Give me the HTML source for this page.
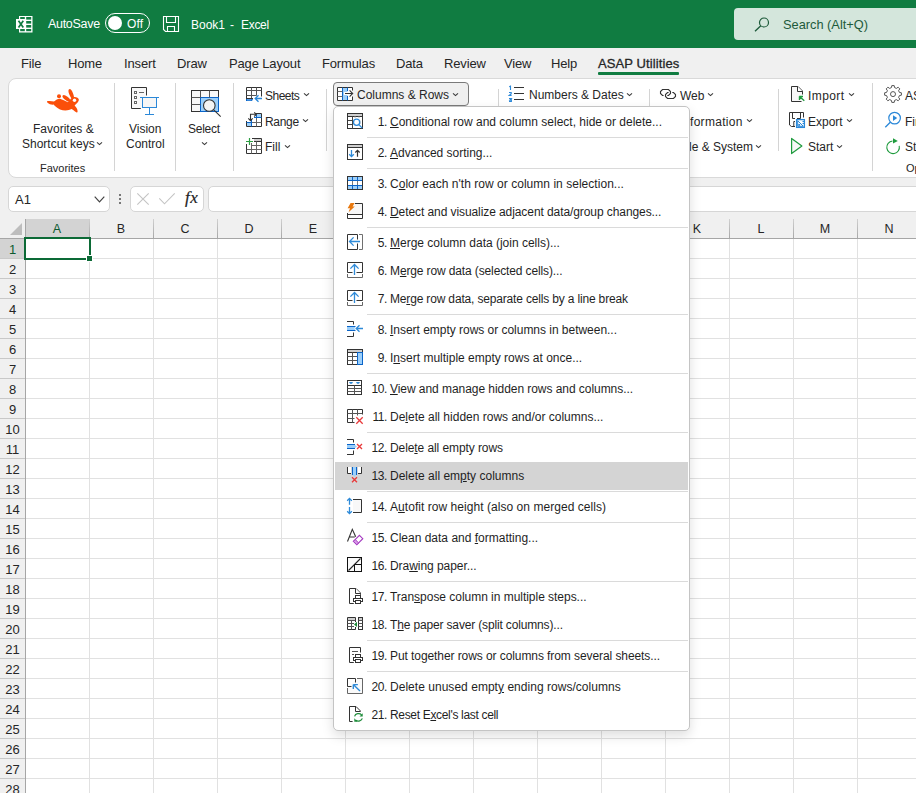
<!DOCTYPE html>
<html><head><meta charset="utf-8"><style>
*{margin:0;padding:0;box-sizing:border-box}
html,body{width:916px;height:793px;overflow:hidden;background:#f0f0f0;font-family:"Liberation Sans",sans-serif;color:#262626;position:relative}
.a{position:absolute}
.t{position:absolute;white-space:nowrap;line-height:16px}
svg{position:absolute;overflow:visible}
.w{color:#fff}
.tab{font-size:13px;color:#262626}
.rb{font-size:12px;color:#262626}
.sep{position:absolute;width:1px;background:#d4d4d4}
.mi{font-size:12px;color:#1f1f1f}
.ul{text-decoration:underline;text-underline-offset:2px;text-decoration-thickness:1px}
</style></head><body>
<div class="a" style="left:0;top:0;width:916px;height:48px;background:#107c41"></div>
<svg style="left:12px;top:12px" width="24" height="24" viewBox="0 0 24 24">
<rect x="7" y="4" width="13.5" height="16.5" fill="#fff"/>
<rect x="8.2" y="5" width="4.6" height="2" fill="#107c41"/>
<rect x="14.2" y="5" width="5" height="2.6" fill="#107c41"/>
<rect x="14.2" y="9" width="5" height="2.6" fill="#107c41"/>
<rect x="14.2" y="13" width="5" height="2.6" fill="#107c41"/>
<rect x="14.2" y="17" width="5" height="2.2" fill="#107c41"/>
<rect x="8.2" y="17" width="4.6" height="2.2" fill="#107c41"/>
<rect x="4" y="7" width="9.4" height="10" fill="#fff"/>
<path d="M6.5 8.8 L11.3 15.4 M11.3 8.8 L6.5 15.4" stroke="#107c41" stroke-width="1.7"/>
</svg>
<div class="t w" style="left:48px;top:16px;font-size:12.5px;letter-spacing:-0.3px">AutoSave</div>
<div class="a" style="left:105px;top:13px;width:45px;height:20px;border:1px solid #fff;border-radius:10px"></div>
<div class="a" style="left:108px;top:16px;width:14px;height:14px;background:#fff;border-radius:50%"></div>
<div class="t w" style="left:127px;top:16px;font-size:12px;letter-spacing:0.2px">Off</div>
<svg style="left:162px;top:15px" width="18" height="18" viewBox="0 0 18 18">
<path d="M1.5 1.5 H16.5 V16.5 H3.5 L1.5 14.5 Z" fill="none" stroke="#fff" stroke-width="1.1"/>
<path d="M4.5 1.5 V7.5 H13.5 V1.5" fill="none" stroke="#fff" stroke-width="1.1"/>
<path d="M5.5 16.5 V11.5 H12.5 V16.5" fill="none" stroke="#fff" stroke-width="1.1"/>
</svg>
<div class="t w" style="left:191px;top:17px;font-size:12px;">Book1</div>
<div class="t w" style="left:230px;top:17px;font-size:12px;">-</div>
<div class="t w" style="left:241px;top:17px;font-size:12px;letter-spacing:-0.3px">Excel</div>
<div class="a" style="left:734px;top:8px;width:200px;height:32px;background:#d4e6dc;border-radius:4px"></div>
<svg style="left:754px;top:17px" width="16" height="15" viewBox="0 0 16 15">
<circle cx="10" cy="5.5" r="4.5" fill="none" stroke="#1d5a3a" stroke-width="1.2"/>
<line x1="6.8" y1="8.7" x2="1" y2="14.3" stroke="#1d5a3a" stroke-width="1.3"/>
</svg>
<div class="t " style="left:783px;top:17px;font-size:12.8px;color:#1e5a3b">Search (Alt+Q)</div>
<div class="t tab" style="left:21px;top:56px;font-size:13px;letter-spacing:-0.15px">File</div>
<div class="t tab" style="left:68px;top:56px;font-size:13px;letter-spacing:-0.15px">Home</div>
<div class="t tab" style="left:124px;top:56px;font-size:13px;letter-spacing:-0.15px">Insert</div>
<div class="t tab" style="left:177px;top:56px;font-size:13px;letter-spacing:-0.15px">Draw</div>
<div class="t tab" style="left:229px;top:56px;font-size:13px;letter-spacing:-0.15px">Page Layout</div>
<div class="t tab" style="left:322px;top:56px;font-size:13px;letter-spacing:-0.15px">Formulas</div>
<div class="t tab" style="left:396px;top:56px;font-size:13px;letter-spacing:-0.15px">Data</div>
<div class="t tab" style="left:444px;top:56px;font-size:13px;letter-spacing:-0.15px">Review</div>
<div class="t tab" style="left:504px;top:56px;font-size:13px;letter-spacing:-0.15px">View</div>
<div class="t tab" style="left:551px;top:56px;font-size:13px;letter-spacing:-0.15px">Help</div>
<div class="t tab" style="left:598px;top:56px;font-size:13px;-webkit-text-stroke:0.3px #262626;letter-spacing:0.1px">ASAP Utilities</div>
<div class="a" style="left:598px;top:72px;width:81px;height:3px;background:#107c41;border-radius:1px"></div>
<div class="a" style="left:8px;top:78px;width:940px;height:100px;background:#fff;border:1px solid #d9d9d9;border-radius:8px"></div>
<div class="sep" style="left:114px;top:83px;height:88px"></div>
<div class="sep" style="left:175px;top:83px;height:88px"></div>
<div class="sep" style="left:233px;top:83px;height:88px"></div>
<div class="sep" style="left:326px;top:89px;height:62px"></div>
<div class="sep" style="left:498px;top:89px;height:62px"></div>
<div class="sep" style="left:649px;top:89px;height:62px"></div>
<div class="sep" style="left:778px;top:89px;height:62px"></div>
<div class="sep" style="left:872px;top:83px;height:88px"></div>
<svg style="left:42px;top:86px" width="40" height="30" viewBox="0 0 40 30">
<path d="M5 15.2 C7.5 14.8 10 15 12 15.6 C14 13.8 16 12.6 18 12.8 C20.5 13.5 23 15 26 16.3 L29 12.6 C31 10.6 33.5 10.4 35.5 11.8 C37.3 13 37.3 14.6 35.6 16.5 C34.6 17.6 33.6 18.6 32.6 19.6 C34 21 35.6 23 35.6 25.2 C35.6 27 34 26.6 33 25.6 C31.8 24.4 30.6 23.4 29.6 23 C27 24.6 22 25 18 23.5 C15 22.3 13 20.2 11.5 18.6 C9.5 18.8 7 18.2 5.6 16.8 C5 16.2 4.8 15.6 5 15.2 Z" fill="#fa4f0a"/>
<ellipse cx="24.3" cy="12.3" rx="4.6" ry="1.9" transform="rotate(38 24.3 12.3)" fill="#fa4f0a"/>
<ellipse cx="29.2" cy="8" rx="5.2" ry="1.9" transform="rotate(68 29.2 8)" fill="#fa4f0a"/>
<circle cx="17" cy="10.3" r="2" fill="#fa4f0a"/>
<circle cx="32.5" cy="14.2" r="1.7" fill="#fff"/>
</svg>
<div class="t rb" style="left:33px;top:121px;font-size:12px;">Favorites &amp;</div>
<div class="t rb" style="left:22px;top:136px;font-size:12px;">Shortcut keys</div>
<svg style="left:97px;top:142px" width="5" height="3" viewBox="0 0 5 3"><polyline points="0,0.3 2.5,2.6 5,0.3" fill="none" stroke="#3a3a3a" stroke-width="1.1"/></svg>
<div class="t rb" style="left:40px;top:160px;font-size:11px;">Favorites</div>
<svg style="left:131px;top:87px" width="29" height="28" viewBox="0 0 29 28">
<path d="M15.5 8.5 V0.5 H0.5 V21.5 H9.8" fill="#f8f8f8" stroke="#333"/>
<rect x="3.5" y="4.5" width="2" height="2" fill="#fff" stroke="#666"/>
<rect x="3.5" y="9.5" width="2" height="2" fill="#fff" stroke="#666"/>
<rect x="3.5" y="14.5" width="2" height="2" fill="#fff" stroke="#666"/>
<line x1="8" y1="5.5" x2="13" y2="5.5" stroke="#666"/>
<rect x="11.5" y="10.5" width="14" height="10" fill="#f6f6f6" stroke="#2b88d8"/>
<line x1="9" y1="10.5" x2="28" y2="10.5" stroke="#2b88d8"/>
<line x1="18.5" y1="21" x2="18.5" y2="27" stroke="#2b88d8"/>
<line x1="14" y1="27.5" x2="23" y2="27.5" stroke="#2b88d8"/>
</svg>
<div class="t rb" style="left:129px;top:121px;font-size:12px;">Vision</div>
<div class="t rb" style="left:126px;top:136px;font-size:12px;">Control</div>
<svg style="left:191px;top:90px" width="31" height="28" viewBox="0 0 31 28">
<rect x="0.5" y="0.5" width="27" height="21" fill="#f8f8f8" stroke="#333"/>
<rect x="9.5" y="7.5" width="18" height="14" fill="#9ccffa" stroke="#0a64c8"/>
<line x1="0.5" y1="7.5" x2="9.5" y2="7.5" stroke="#555"/>
<line x1="0.5" y1="14.5" x2="9.5" y2="14.5" stroke="#555"/>
<line x1="9.5" y1="0.5" x2="9.5" y2="7.5" stroke="#555"/>
<line x1="18.5" y1="0.5" x2="18.5" y2="7.5" stroke="#555"/>
<circle cx="18.3" cy="15.5" r="5.8" fill="#f4f4f4" stroke="#333" stroke-width="1.1"/>
<line x1="22.5" y1="19.7" x2="29.7" y2="26.6" stroke="#333" stroke-width="1.1"/>
</svg>
<div class="t rb" style="left:188px;top:121px;font-size:12px;letter-spacing:-0.25px">Select</div>
<svg style="left:202px;top:142px" width="5" height="3" viewBox="0 0 5 3"><polyline points="0,0.3 2.5,2.6 5,0.3" fill="none" stroke="#3a3a3a" stroke-width="1.1"/></svg>
<svg style="left:246px;top:87px" width="17" height="16" viewBox="0 0 17 16">
<path d="M0.5 11.5 V0.5 H15.5 V9.5" fill="none" stroke="#333"/>
<path d="M0.5 3.5 H15.5 M0.5 8.5 H10.5 M5.5 0.5 V11.5 M10.5 0.5 V8.5" stroke="#555"/>
<path d="M0 11.5 H7" stroke="#333"/>
<path d="M0 12 H7 L6 14 H0 Z" fill="#0a64c8"/><rect x="1" y="12.5" width="4.5" height="0.8" fill="#9ccffa"/>
<path d="M16 11.5 H9.3 M12.5 8.2 L9.2 11.5 L12.5 14.8" fill="none" stroke="#2b88d8" stroke-width="1.3"/>
</svg>
<div class="t rb" style="left:265px;top:88px;font-size:12px;letter-spacing:-0.5px">Sheets</div>
<svg style="left:304px;top:93px" width="5" height="3" viewBox="0 0 5 3"><polyline points="0,0.3 2.5,2.6 5,0.3" fill="none" stroke="#3a3a3a" stroke-width="1.1"/></svg>
<svg style="left:246px;top:110px" width="17" height="17" viewBox="0 0 17 17">
<path d="M10 3.5 H15.5 V16.5 H0.5 V11" fill="#fff" stroke="#333"/>
<rect x="10" y="4" width="5" height="3" fill="#9ccffa"/><rect x="1" y="12" width="4.5" height="4" fill="#9ccffa"/>
<path d="M8 7.5 H15.5 M10.5 5 V7.5 M0.5 12.5 H5.5 M5.5 10 V16.5" stroke="#0a64c8"/>
<path d="M10.5 8 V16.5 M6 12.5 H15.5" stroke="#666"/>
<path d="M4.5 10.6 V4.3 H10.2 M8.2 2.3 L10.4 4.3 L8.2 6.5 M2.3 8.4 L4.5 10.6 L6.7 8.4" fill="none" stroke="#333" stroke-width="1.1"/>
</svg>
<div class="t rb" style="left:265px;top:114px;font-size:12px;letter-spacing:-0.3px">Range</div>
<svg style="left:303px;top:119px" width="5" height="3" viewBox="0 0 5 3"><polyline points="0,0.3 2.5,2.6 5,0.3" fill="none" stroke="#3a3a3a" stroke-width="1.1"/></svg>
<svg style="left:246px;top:136px" width="17" height="18" viewBox="0 0 17 18">
<path d="M0.5 8 V17.5 H15.5 V2.5 H6" fill="#fff" stroke="#333"/>
<rect x="8" y="3" width="7" height="2" fill="#d0d0d0"/>
<path d="M8 5.5 H15.5" stroke="#333"/>
<path d="M5.5 7 V17.5 M10.5 5.5 V17.5 M5 9.5 H15.5 M0.5 13.5 H15.5" stroke="#666"/>
<path d="M0 5.5 H7 M3.5 2 V9" stroke="#2ea043" stroke-width="1.2"/>
</svg>
<div class="t rb" style="left:265px;top:139px;font-size:12px;">Fill</div>
<svg style="left:285px;top:145px" width="5" height="3" viewBox="0 0 5 3"><polyline points="0,0.3 2.5,2.6 5,0.3" fill="none" stroke="#3a3a3a" stroke-width="1.1"/></svg>
<svg style="left:506px;top:84px" width="20" height="20" viewBox="0 0 20 20">
<path d="M8 3.5 H18 M8 9.5 H18 M8 15.5 H18" stroke="#333"/>
<path d="M3.2 2.8 L4.5 2.2 V6" fill="none" stroke="#2b88d8" stroke-width="1.1"/>
<path d="M3 8.5 H5.2 V9.7 L3.2 11.4 H5.6" fill="none" stroke="#2b88d8" stroke-width="1.1"/>
<path d="M3 14.5 H5.4 L4 15.9 H5.4 V17.4 H3" fill="none" stroke="#2b88d8" stroke-width="1.1"/>
</svg>
<div class="t rb" style="left:529px;top:87px;font-size:12px;">Numbers &amp; Dates</div>
<svg style="left:627px;top:93px" width="5" height="3" viewBox="0 0 5 3"><polyline points="0,0.3 2.5,2.6 5,0.3" fill="none" stroke="#3a3a3a" stroke-width="1.1"/></svg>
<svg style="left:658px;top:84px" width="20" height="20" viewBox="0 0 20 20">
<path d="M5.6 11.5 H4.5 L2.5 9.5 V7.5 L4.5 5.5 H10.5 L12.5 7.5 V9.5 L10.5 11.5 H9.3" fill="none" stroke="#333" stroke-width="1.1"/>
<path d="M10.6 8.5 H9.5 L7.5 10.5 V12.5 L9.5 14.5 H15.5 L17.5 12.5 V10.5 L15.5 8.5 H14.3" fill="none" stroke="#333" stroke-width="1.1"/>
</svg>
<div class="t rb" style="left:680px;top:88px;font-size:12px;">Web</div>
<svg style="left:708px;top:93px" width="5" height="3" viewBox="0 0 5 3"><polyline points="0,0.3 2.5,2.6 5,0.3" fill="none" stroke="#3a3a3a" stroke-width="1.1"/></svg>
<div class="t rb" style="left:690px;top:114px;font-size:12px;letter-spacing:0.3px">formation</div>
<svg style="left:747px;top:119px" width="5" height="3" viewBox="0 0 5 3"><polyline points="0,0.3 2.5,2.6 5,0.3" fill="none" stroke="#3a3a3a" stroke-width="1.1"/></svg>
<div class="t rb" style="left:689px;top:139px;font-size:12px;">le &amp; System</div>
<svg style="left:756px;top:145px" width="5" height="3" viewBox="0 0 5 3"><polyline points="0,0.3 2.5,2.6 5,0.3" fill="none" stroke="#3a3a3a" stroke-width="1.1"/></svg>
<svg style="left:787px;top:84px" width="20" height="20" viewBox="0 0 20 20">
<path d="M14.5 17.5 H4.5 V2.5 H11 L15.5 7 V10.5" fill="#f8f8f8" stroke="#333"/>
<path d="M10.5 2.5 V7.5 H15.5" fill="#fff" stroke="#333"/>
<path d="M12.3 12.5 H16 M12.5 12.3 V16 M12.8 12.8 L17.3 16.8" fill="none" stroke="#1f9b3e" stroke-width="1.4"/>
</svg>
<div class="t rb" style="left:808px;top:88px;font-size:12px;letter-spacing:0.4px">Import</div>
<svg style="left:849px;top:93px" width="5" height="3" viewBox="0 0 5 3"><polyline points="0,0.3 2.5,2.6 5,0.3" fill="none" stroke="#3a3a3a" stroke-width="1.1"/></svg>
<svg style="left:787px;top:110px" width="20" height="20" viewBox="0 0 20 20">
<path d="M2.5 15 V2.5 H16.5 V7.5" fill="#fff" stroke="#333"/>
<path d="M5.5 2.5 V8.5 H8 M10 8.5 H13.5 V2.5" fill="none" stroke="#333"/>
<path d="M2.5 15 L4.5 16.5 H8 M6.8 16.5 V11.5 H8" fill="none" stroke="#333"/>
<rect x="9.6" y="9.6" width="7.8" height="7.8" fill="#fff" stroke="#2b88d8" stroke-width="1.3"/>
<path d="M10.7 10.7 L16.3 16.3 H10.7 Z" fill="none" stroke="#2b88d8" stroke-width="1"/>
<path d="M15.5 11.5 H17 M15.5 13.5 H17" stroke="#2b88d8"/>
<rect x="11.3" y="14" width="1.8" height="1.8" fill="#2b88d8"/>
</svg>
<div class="t rb" style="left:808px;top:114px;font-size:12px;">Export</div>
<svg style="left:847px;top:119px" width="5" height="3" viewBox="0 0 5 3"><polyline points="0,0.3 2.5,2.6 5,0.3" fill="none" stroke="#3a3a3a" stroke-width="1.1"/></svg>
<svg style="left:787px;top:136px" width="20" height="20" viewBox="0 0 20 20">
<path d="M4.6 2.4 L14.9 10 L4.6 17.6 Z" fill="#f8f8f8" stroke="#1f9b3e" stroke-width="1.2" stroke-linejoin="round"/>
</svg>
<div class="t rb" style="left:808px;top:139px;font-size:12px;">Start</div>
<svg style="left:837px;top:145px" width="5" height="3" viewBox="0 0 5 3"><polyline points="0,0.3 2.5,2.6 5,0.3" fill="none" stroke="#3a3a3a" stroke-width="1.1"/></svg>
<svg style="left:882px;top:84px" width="20" height="20" viewBox="0 0 20 20">
<circle cx="11" cy="10.1" r="2.5" fill="none" stroke="#444" stroke-width="0.9"/>
<path d="M9.8 2.6 H12.2 L12.6 4.6 L14.4 5.4 L16.1 4.2 L17.8 5.9 L16.6 7.6 L17.4 9.4 L19.4 9.8 V12.2 L17.4 12.6 L16.6 14.4 L17.8 16.1 L16.1 17.8 L14.4 16.6 L12.6 17.4 L12.2 19.4 H9.8 L9.4 17.4 L7.6 16.6 L5.9 17.8 L4.2 16.1 L5.4 14.4 L4.6 12.6 L2.6 12.2 V9.8 L4.6 9.4 L5.4 7.6 L4.2 5.9 L5.9 4.2 L7.6 5.4 L9.4 4.6 Z" transform="translate(0,-1) scale(1)" fill="none" stroke="#444" stroke-width="0.9"/>
</svg>
<div class="t rb" style="left:905px;top:88px;font-size:12px;">ASAP</div>
<svg style="left:882px;top:110px" width="20" height="20" viewBox="0 0 20 20">
<circle cx="12.6" cy="8.1" r="5.8" fill="#fff" stroke="#2b88d8" stroke-width="1.2"/>
<path d="M11 5.3 L15.2 8.1 L11 10.9 Z" fill="#2b88d8"/>
<line x1="8.3" y1="12.3" x2="3.3" y2="17.3" stroke="#2b88d8" stroke-width="1.3"/>
</svg>
<div class="t rb" style="left:905px;top:114px;font-size:12px;">Find</div>
<svg style="left:882px;top:136px" width="20" height="20" viewBox="0 0 20 20">
<path d="M10.5 5 A6.3 6.3 0 1 0 17.2 9.8" fill="none" stroke="#1f9b3e" stroke-width="1.1"/>
<path d="M11 2.3 L15.8 5 L11 7.6 Z" fill="#1f9b3e"/>
</svg>
<div class="t rb" style="left:905px;top:139px;font-size:12px;">Start</div>
<div class="t rb" style="left:906px;top:160px;font-size:11px;">Options</div>
<div class="a" style="left:8px;top:186px;width:102px;height:26px;background:#fff;border:1px solid #d6d6d6;border-radius:5px"></div>
<div class="t rb" style="left:15px;top:192px;font-size:13px;">A1</div>
<svg style="left:94px;top:196px" width="11" height="7" viewBox="0 0 11 7"><polyline points="0.7,0.7 5.5,5.8 10.3,0.7" fill="none" stroke="#444" stroke-width="1.2"/></svg>
<div class="a" style="left:119px;top:194px;width:2px;height:2px;background:#777"></div>
<div class="a" style="left:119px;top:198px;width:2px;height:2px;background:#777"></div>
<div class="a" style="left:119px;top:202px;width:2px;height:2px;background:#777"></div>
<div class="a" style="left:130px;top:186px;width:74px;height:26px;background:#fff;border:1px solid #d6d6d6;border-radius:5px"></div>
<svg style="left:137px;top:193px" width="12" height="12" viewBox="0 0 12 12"><path d="M0.3 0.3 L11.7 11.7 M11.7 0.3 L0.3 11.7" stroke="#c4c4c4" stroke-width="1.1"/></svg>
<svg style="left:159px;top:193px" width="16" height="12" viewBox="0 0 16 12"><path d="M0.3 5.3 L5.5 10.8 L15.7 0.3" fill="none" stroke="#c4c4c4" stroke-width="1.1"/></svg>
<div class="t" style="left:185px;top:190px;font-family:'Liberation Serif',serif;font-style:italic;font-size:17px;color:#222;-webkit-text-stroke:0.2px #222;letter-spacing:0.5px">fx</div>
<div class="a" style="left:208px;top:186px;width:740px;height:26px;background:#fff;border:1px solid #d6d6d6;border-radius:5px"></div>
<div class="a" style="left:26px;top:239px;width:890px;height:554px;background:#fff"></div>
<svg style="left:10px;top:223px" width="12" height="12" viewBox="0 0 12 12"><path d="M12 0 V12 H0 Z" fill="#bdbdbd"/></svg>
<div class="a" style="left:26px;top:219px;width:63px;height:18px;background:#d3d3d3"></div>
<div class="a" style="left:89px;top:219px;width:1px;height:19px;background:linear-gradient(#d0d0d0,#a8a8a8)"></div>
<div class="a" style="left:153px;top:219px;width:1px;height:19px;background:linear-gradient(#d0d0d0,#a8a8a8)"></div>
<div class="a" style="left:217px;top:219px;width:1px;height:19px;background:linear-gradient(#d0d0d0,#a8a8a8)"></div>
<div class="a" style="left:281px;top:219px;width:1px;height:19px;background:linear-gradient(#d0d0d0,#a8a8a8)"></div>
<div class="a" style="left:345px;top:219px;width:1px;height:19px;background:linear-gradient(#d0d0d0,#a8a8a8)"></div>
<div class="a" style="left:409px;top:219px;width:1px;height:19px;background:linear-gradient(#d0d0d0,#a8a8a8)"></div>
<div class="a" style="left:473px;top:219px;width:1px;height:19px;background:linear-gradient(#d0d0d0,#a8a8a8)"></div>
<div class="a" style="left:537px;top:219px;width:1px;height:19px;background:linear-gradient(#d0d0d0,#a8a8a8)"></div>
<div class="a" style="left:601px;top:219px;width:1px;height:19px;background:linear-gradient(#d0d0d0,#a8a8a8)"></div>
<div class="a" style="left:665px;top:219px;width:1px;height:19px;background:linear-gradient(#d0d0d0,#a8a8a8)"></div>
<div class="a" style="left:729px;top:219px;width:1px;height:19px;background:linear-gradient(#d0d0d0,#a8a8a8)"></div>
<div class="a" style="left:793px;top:219px;width:1px;height:19px;background:linear-gradient(#d0d0d0,#a8a8a8)"></div>
<div class="a" style="left:857px;top:219px;width:1px;height:19px;background:linear-gradient(#d0d0d0,#a8a8a8)"></div>
<div class="a" style="left:921px;top:219px;width:1px;height:19px;background:linear-gradient(#d0d0d0,#a8a8a8)"></div>
<div class="a" style="left:0;top:238px;width:916px;height:1px;background:#a6a6a6"></div>
<div class="a" style="left:25px;top:219px;width:1px;height:574px;background:#a6a6a6"></div>
<div class="t" style="left:37px;top:221px;width:40px;text-align:center;font-size:12.5px;color:#0c5a2f">A</div>
<div class="t" style="left:101px;top:221px;width:40px;text-align:center;font-size:12.5px;color:#262626">B</div>
<div class="t" style="left:165px;top:221px;width:40px;text-align:center;font-size:12.5px;color:#262626">C</div>
<div class="t" style="left:229px;top:221px;width:40px;text-align:center;font-size:12.5px;color:#262626">D</div>
<div class="t" style="left:293px;top:221px;width:40px;text-align:center;font-size:12.5px;color:#262626">E</div>
<div class="t" style="left:357px;top:221px;width:40px;text-align:center;font-size:12.5px;color:#262626">F</div>
<div class="t" style="left:421px;top:221px;width:40px;text-align:center;font-size:12.5px;color:#262626">G</div>
<div class="t" style="left:485px;top:221px;width:40px;text-align:center;font-size:12.5px;color:#262626">H</div>
<div class="t" style="left:549px;top:221px;width:40px;text-align:center;font-size:12.5px;color:#262626">I</div>
<div class="t" style="left:613px;top:221px;width:40px;text-align:center;font-size:12.5px;color:#262626">J</div>
<div class="t" style="left:677px;top:221px;width:40px;text-align:center;font-size:12.5px;color:#262626">K</div>
<div class="t" style="left:741px;top:221px;width:40px;text-align:center;font-size:12.5px;color:#262626">L</div>
<div class="t" style="left:805px;top:221px;width:40px;text-align:center;font-size:12.5px;color:#262626">M</div>
<div class="t" style="left:869px;top:221px;width:40px;text-align:center;font-size:12.5px;color:#262626">N</div>
<div class="a" style="left:89px;top:239px;width:1px;height:554px;background:#e1e1e1"></div>
<div class="a" style="left:153px;top:239px;width:1px;height:554px;background:#e1e1e1"></div>
<div class="a" style="left:217px;top:239px;width:1px;height:554px;background:#e1e1e1"></div>
<div class="a" style="left:281px;top:239px;width:1px;height:554px;background:#e1e1e1"></div>
<div class="a" style="left:345px;top:239px;width:1px;height:554px;background:#e1e1e1"></div>
<div class="a" style="left:409px;top:239px;width:1px;height:554px;background:#e1e1e1"></div>
<div class="a" style="left:473px;top:239px;width:1px;height:554px;background:#e1e1e1"></div>
<div class="a" style="left:537px;top:239px;width:1px;height:554px;background:#e1e1e1"></div>
<div class="a" style="left:601px;top:239px;width:1px;height:554px;background:#e1e1e1"></div>
<div class="a" style="left:665px;top:239px;width:1px;height:554px;background:#e1e1e1"></div>
<div class="a" style="left:729px;top:239px;width:1px;height:554px;background:#e1e1e1"></div>
<div class="a" style="left:793px;top:239px;width:1px;height:554px;background:#e1e1e1"></div>
<div class="a" style="left:857px;top:239px;width:1px;height:554px;background:#e1e1e1"></div>
<div class="a" style="left:921px;top:239px;width:1px;height:554px;background:#e1e1e1"></div>
<div class="a" style="left:0;top:239px;width:25px;height:19px;background:#d3d3d3"></div>
<div class="a" style="left:26px;top:258px;width:890px;height:1px;background:#e1e1e1"></div>
<div class="a" style="left:0;top:258px;width:25px;height:1px;background:#c8c8c8"></div>
<div class="t" style="left:0;top:242px;width:25px;text-align:center;font-size:13px;line-height:16px;color:#0c5a2f">1</div>
<div class="a" style="left:26px;top:278px;width:890px;height:1px;background:#e1e1e1"></div>
<div class="a" style="left:0;top:278px;width:25px;height:1px;background:#c8c8c8"></div>
<div class="t" style="left:0;top:262px;width:25px;text-align:center;font-size:13px;line-height:16px;color:#262626">2</div>
<div class="a" style="left:26px;top:298px;width:890px;height:1px;background:#e1e1e1"></div>
<div class="a" style="left:0;top:298px;width:25px;height:1px;background:#c8c8c8"></div>
<div class="t" style="left:0;top:282px;width:25px;text-align:center;font-size:13px;line-height:16px;color:#262626">3</div>
<div class="a" style="left:26px;top:318px;width:890px;height:1px;background:#e1e1e1"></div>
<div class="a" style="left:0;top:318px;width:25px;height:1px;background:#c8c8c8"></div>
<div class="t" style="left:0;top:302px;width:25px;text-align:center;font-size:13px;line-height:16px;color:#262626">4</div>
<div class="a" style="left:26px;top:338px;width:890px;height:1px;background:#e1e1e1"></div>
<div class="a" style="left:0;top:338px;width:25px;height:1px;background:#c8c8c8"></div>
<div class="t" style="left:0;top:322px;width:25px;text-align:center;font-size:13px;line-height:16px;color:#262626">5</div>
<div class="a" style="left:26px;top:358px;width:890px;height:1px;background:#e1e1e1"></div>
<div class="a" style="left:0;top:358px;width:25px;height:1px;background:#c8c8c8"></div>
<div class="t" style="left:0;top:342px;width:25px;text-align:center;font-size:13px;line-height:16px;color:#262626">6</div>
<div class="a" style="left:26px;top:378px;width:890px;height:1px;background:#e1e1e1"></div>
<div class="a" style="left:0;top:378px;width:25px;height:1px;background:#c8c8c8"></div>
<div class="t" style="left:0;top:362px;width:25px;text-align:center;font-size:13px;line-height:16px;color:#262626">7</div>
<div class="a" style="left:26px;top:398px;width:890px;height:1px;background:#e1e1e1"></div>
<div class="a" style="left:0;top:398px;width:25px;height:1px;background:#c8c8c8"></div>
<div class="t" style="left:0;top:382px;width:25px;text-align:center;font-size:13px;line-height:16px;color:#262626">8</div>
<div class="a" style="left:26px;top:418px;width:890px;height:1px;background:#e1e1e1"></div>
<div class="a" style="left:0;top:418px;width:25px;height:1px;background:#c8c8c8"></div>
<div class="t" style="left:0;top:402px;width:25px;text-align:center;font-size:13px;line-height:16px;color:#262626">9</div>
<div class="a" style="left:26px;top:438px;width:890px;height:1px;background:#e1e1e1"></div>
<div class="a" style="left:0;top:438px;width:25px;height:1px;background:#c8c8c8"></div>
<div class="t" style="left:0;top:422px;width:25px;text-align:center;font-size:13px;line-height:16px;color:#262626">10</div>
<div class="a" style="left:26px;top:458px;width:890px;height:1px;background:#e1e1e1"></div>
<div class="a" style="left:0;top:458px;width:25px;height:1px;background:#c8c8c8"></div>
<div class="t" style="left:0;top:442px;width:25px;text-align:center;font-size:13px;line-height:16px;color:#262626">11</div>
<div class="a" style="left:26px;top:478px;width:890px;height:1px;background:#e1e1e1"></div>
<div class="a" style="left:0;top:478px;width:25px;height:1px;background:#c8c8c8"></div>
<div class="t" style="left:0;top:462px;width:25px;text-align:center;font-size:13px;line-height:16px;color:#262626">12</div>
<div class="a" style="left:26px;top:498px;width:890px;height:1px;background:#e1e1e1"></div>
<div class="a" style="left:0;top:498px;width:25px;height:1px;background:#c8c8c8"></div>
<div class="t" style="left:0;top:482px;width:25px;text-align:center;font-size:13px;line-height:16px;color:#262626">13</div>
<div class="a" style="left:26px;top:518px;width:890px;height:1px;background:#e1e1e1"></div>
<div class="a" style="left:0;top:518px;width:25px;height:1px;background:#c8c8c8"></div>
<div class="t" style="left:0;top:502px;width:25px;text-align:center;font-size:13px;line-height:16px;color:#262626">14</div>
<div class="a" style="left:26px;top:538px;width:890px;height:1px;background:#e1e1e1"></div>
<div class="a" style="left:0;top:538px;width:25px;height:1px;background:#c8c8c8"></div>
<div class="t" style="left:0;top:522px;width:25px;text-align:center;font-size:13px;line-height:16px;color:#262626">15</div>
<div class="a" style="left:26px;top:558px;width:890px;height:1px;background:#e1e1e1"></div>
<div class="a" style="left:0;top:558px;width:25px;height:1px;background:#c8c8c8"></div>
<div class="t" style="left:0;top:542px;width:25px;text-align:center;font-size:13px;line-height:16px;color:#262626">16</div>
<div class="a" style="left:26px;top:578px;width:890px;height:1px;background:#e1e1e1"></div>
<div class="a" style="left:0;top:578px;width:25px;height:1px;background:#c8c8c8"></div>
<div class="t" style="left:0;top:562px;width:25px;text-align:center;font-size:13px;line-height:16px;color:#262626">17</div>
<div class="a" style="left:26px;top:598px;width:890px;height:1px;background:#e1e1e1"></div>
<div class="a" style="left:0;top:598px;width:25px;height:1px;background:#c8c8c8"></div>
<div class="t" style="left:0;top:582px;width:25px;text-align:center;font-size:13px;line-height:16px;color:#262626">18</div>
<div class="a" style="left:26px;top:618px;width:890px;height:1px;background:#e1e1e1"></div>
<div class="a" style="left:0;top:618px;width:25px;height:1px;background:#c8c8c8"></div>
<div class="t" style="left:0;top:602px;width:25px;text-align:center;font-size:13px;line-height:16px;color:#262626">19</div>
<div class="a" style="left:26px;top:638px;width:890px;height:1px;background:#e1e1e1"></div>
<div class="a" style="left:0;top:638px;width:25px;height:1px;background:#c8c8c8"></div>
<div class="t" style="left:0;top:622px;width:25px;text-align:center;font-size:13px;line-height:16px;color:#262626">20</div>
<div class="a" style="left:26px;top:658px;width:890px;height:1px;background:#e1e1e1"></div>
<div class="a" style="left:0;top:658px;width:25px;height:1px;background:#c8c8c8"></div>
<div class="t" style="left:0;top:642px;width:25px;text-align:center;font-size:13px;line-height:16px;color:#262626">21</div>
<div class="a" style="left:26px;top:678px;width:890px;height:1px;background:#e1e1e1"></div>
<div class="a" style="left:0;top:678px;width:25px;height:1px;background:#c8c8c8"></div>
<div class="t" style="left:0;top:662px;width:25px;text-align:center;font-size:13px;line-height:16px;color:#262626">22</div>
<div class="a" style="left:26px;top:698px;width:890px;height:1px;background:#e1e1e1"></div>
<div class="a" style="left:0;top:698px;width:25px;height:1px;background:#c8c8c8"></div>
<div class="t" style="left:0;top:682px;width:25px;text-align:center;font-size:13px;line-height:16px;color:#262626">23</div>
<div class="a" style="left:26px;top:718px;width:890px;height:1px;background:#e1e1e1"></div>
<div class="a" style="left:0;top:718px;width:25px;height:1px;background:#c8c8c8"></div>
<div class="t" style="left:0;top:702px;width:25px;text-align:center;font-size:13px;line-height:16px;color:#262626">24</div>
<div class="a" style="left:26px;top:738px;width:890px;height:1px;background:#e1e1e1"></div>
<div class="a" style="left:0;top:738px;width:25px;height:1px;background:#c8c8c8"></div>
<div class="t" style="left:0;top:722px;width:25px;text-align:center;font-size:13px;line-height:16px;color:#262626">25</div>
<div class="a" style="left:26px;top:758px;width:890px;height:1px;background:#e1e1e1"></div>
<div class="a" style="left:0;top:758px;width:25px;height:1px;background:#c8c8c8"></div>
<div class="t" style="left:0;top:742px;width:25px;text-align:center;font-size:13px;line-height:16px;color:#262626">26</div>
<div class="a" style="left:26px;top:778px;width:890px;height:1px;background:#e1e1e1"></div>
<div class="a" style="left:0;top:778px;width:25px;height:1px;background:#c8c8c8"></div>
<div class="t" style="left:0;top:762px;width:25px;text-align:center;font-size:13px;line-height:16px;color:#262626">27</div>
<div class="a" style="left:26px;top:798px;width:890px;height:1px;background:#e1e1e1"></div>
<div class="a" style="left:0;top:798px;width:25px;height:1px;background:#c8c8c8"></div>
<div class="t" style="left:0;top:782px;width:25px;text-align:center;font-size:13px;line-height:16px;color:#262626">28</div>
<div class="a" style="left:24px;top:237px;width:67px;height:23px;border:2px solid #0c6a36"></div>
<div class="a" style="left:86px;top:255px;width:7px;height:7px;background:#fff"></div>
<div class="a" style="left:87px;top:256px;width:5px;height:5px;background:#0c6a36"></div>
<div class="a" style="left:333px;top:82px;width:136px;height:24px;background:#f0f0f0;border:1px solid #7a7a7a;border-radius:4px"></div>
<svg style="left:337px;top:87px" width="17" height="15" viewBox="0 0 17 15">
<path d="M15.5 3.5 V0.5 H0.5 V13.5 H15.5 V9.5" fill="#fff" stroke="#333"/>
<rect x="6" y="1" width="4.5" height="12" fill="#9ccffa"/>
<path d="M5.5 0.5 V13.5 M10.5 0.5 V4 M10.5 9 V13.5" stroke="#0a64c8"/>
<path d="M0.5 4.5 H5.5 M0.5 9.5 H5.5" stroke="#666"/>
<rect x="7" y="5" width="4" height="3" fill="#fff"/>
<path d="M8 6.5 H15.6 M12.6 3.4 L15.7 6.5 L12.6 9.6" fill="none" stroke="#333" stroke-width="1.1"/>
</svg>
<div class="t rb" style="left:357px;top:87px;font-size:12px;">Columns &amp; Rows</div>
<svg style="left:453px;top:93px" width="5" height="3" viewBox="0 0 5 3"><polyline points="0,0.3 2.5,2.6 5,0.3" fill="none" stroke="#3a3a3a" stroke-width="1.1"/></svg>
<div class="a" style="left:333px;top:106px;width:357px;height:625px;background:#fff;border:1px solid #c4c4c4;border-radius:5px;box-shadow:0 5px 12px rgba(0,0,0,0.13)"></div>
<div class="a" style="left:335px;top:462px;width:353px;height:28px;background:#d4d4d4"></div>
<div class="a" style="left:367px;top:137px;width:321px;height:1px;background:#dadada"></div>
<div class="a" style="left:367px;top:168px;width:321px;height:1px;background:#dadada"></div>
<div class="a" style="left:367px;top:227px;width:321px;height:1px;background:#dadada"></div>
<div class="a" style="left:367px;top:314px;width:321px;height:1px;background:#dadada"></div>
<div class="a" style="left:367px;top:373px;width:321px;height:1px;background:#dadada"></div>
<div class="a" style="left:367px;top:432px;width:321px;height:1px;background:#dadada"></div>
<div class="a" style="left:367px;top:491px;width:321px;height:1px;background:#dadada"></div>
<div class="a" style="left:367px;top:522px;width:321px;height:1px;background:#dadada"></div>
<div class="a" style="left:367px;top:581px;width:321px;height:1px;background:#dadada"></div>
<div class="a" style="left:367px;top:640px;width:321px;height:1px;background:#dadada"></div>
<div class="a" style="left:367px;top:671px;width:321px;height:1px;background:#dadada"></div>
<div class="t mi" style="left:346px;top:114px;width:41px;text-align:right;letter-spacing:-0.4px">1.</div>
<div class="t mi" style="left:390px;top:114px;letter-spacing:-0.004px"><u>C</u>onditional row and column select, hide or delete...</div>
<div class="t mi" style="left:346px;top:145px;width:41px;text-align:right;letter-spacing:-0.4px">2.</div>
<div class="t mi" style="left:390px;top:145px;letter-spacing:-0.017px"><u>A</u>dvanced sorting...</div>
<div class="t mi" style="left:346px;top:176px;width:41px;text-align:right;letter-spacing:-0.4px">3.</div>
<div class="t mi" style="left:390px;top:176px;letter-spacing:0.034px">C<u>o</u>lor each n'th row or column in selection...</div>
<div class="t mi" style="left:346px;top:204px;width:41px;text-align:right;letter-spacing:-0.4px">4.</div>
<div class="t mi" style="left:390px;top:204px;letter-spacing:-0.082px"><u>D</u>etect and visualize adjacent data/group changes...</div>
<div class="t mi" style="left:346px;top:235px;width:41px;text-align:right;letter-spacing:-0.4px">5.</div>
<div class="t mi" style="left:390px;top:235px;letter-spacing:-0.006px"><u>M</u>erge column data (join cells)...</div>
<div class="t mi" style="left:346px;top:263px;width:41px;text-align:right;letter-spacing:-0.4px">6.</div>
<div class="t mi" style="left:390px;top:263px;letter-spacing:-0.127px">M<u>e</u>rge row data (selected cells)...</div>
<div class="t mi" style="left:346px;top:291px;width:41px;text-align:right;letter-spacing:-0.4px">7.</div>
<div class="t mi" style="left:390px;top:291px;letter-spacing:-0.167px">Me<u>r</u>ge row data, separate cells by a line break</div>
<div class="t mi" style="left:346px;top:322px;width:41px;text-align:right;letter-spacing:-0.4px">8.</div>
<div class="t mi" style="left:390px;top:322px;letter-spacing:-0.027px"><u>I</u>nsert empty rows or columns in between...</div>
<div class="t mi" style="left:346px;top:350px;width:41px;text-align:right;letter-spacing:-0.4px">9.</div>
<div class="t mi" style="left:390px;top:350px;letter-spacing:0.003px">I<u>n</u>sert multiple empty rows at once...</div>
<div class="t mi" style="left:346px;top:381px;width:41px;text-align:right;letter-spacing:-0.4px">10.</div>
<div class="t mi" style="left:390px;top:381px;letter-spacing:-0.054px"><u>V</u>iew and manage hidden rows and columns...</div>
<div class="t mi" style="left:346px;top:409px;width:41px;text-align:right;letter-spacing:-0.4px">11.</div>
<div class="t mi" style="left:390px;top:409px;letter-spacing:0.000px">De<u>l</u>ete all hidden rows and/or columns...</div>
<div class="t mi" style="left:346px;top:440px;width:41px;text-align:right;letter-spacing:-0.4px">12.</div>
<div class="t mi" style="left:390px;top:440px;letter-spacing:-0.085px">Dele<u>t</u>e all empty rows</div>
<div class="t mi" style="left:346px;top:468px;width:41px;text-align:right;letter-spacing:-0.4px">13.</div>
<div class="t mi" style="left:390px;top:468px;letter-spacing:0.004px">Delete all em<u>p</u>ty columns</div>
<div class="t mi" style="left:346px;top:499px;width:41px;text-align:right;letter-spacing:-0.4px">14.</div>
<div class="t mi" style="left:390px;top:499px;letter-spacing:0.047px">A<u>u</u>tofit row height (also on merged cells)</div>
<div class="t mi" style="left:346px;top:530px;width:41px;text-align:right;letter-spacing:-0.4px">15.</div>
<div class="t mi" style="left:390px;top:530px;letter-spacing:0.000px">Clean data and <u>f</u>ormatting...</div>
<div class="t mi" style="left:346px;top:558px;width:41px;text-align:right;letter-spacing:-0.4px">16.</div>
<div class="t mi" style="left:390px;top:558px;letter-spacing:-0.047px">Dra<u>w</u>ing paper...</div>
<div class="t mi" style="left:346px;top:589px;width:41px;text-align:right;letter-spacing:-0.4px">17.</div>
<div class="t mi" style="left:390px;top:589px;letter-spacing:-0.031px">Tran<u>s</u>pose column in multiple steps...</div>
<div class="t mi" style="left:346px;top:617px;width:41px;text-align:right;letter-spacing:-0.4px">18.</div>
<div class="t mi" style="left:390px;top:617px;letter-spacing:-0.155px">T<u>h</u>e paper saver (split columns)...</div>
<div class="t mi" style="left:346px;top:648px;width:41px;text-align:right;letter-spacing:-0.4px">19.</div>
<div class="t mi" style="left:390px;top:648px;letter-spacing:-0.080px">Put to<u>g</u>ether rows or columns from several sheets...</div>
<div class="t mi" style="left:346px;top:679px;width:41px;text-align:right;letter-spacing:-0.4px">20.</div>
<div class="t mi" style="left:390px;top:679px;letter-spacing:0.032px">Delete unused empt<u>y</u> ending rows/columns</div>
<div class="t mi" style="left:346px;top:707px;width:41px;text-align:right;letter-spacing:-0.4px">21.</div>
<div class="t mi" style="left:390px;top:707px;letter-spacing:-0.327px">Reset E<u>x</u>cel's last cell</div>
<svg style="left:347px;top:113px" width="16" height="16" viewBox="0 0 16 16"><rect x="0.5" y="0.5" width="15" height="15" fill="#fff" stroke="#333"/><rect x="1" y="1" width="14" height="2" fill="#cfcfcf"/><path d="M0.5 3.5 H15.5" stroke="#333"/><path d="M1 7.5 H5 M1 11.5 H5 M5.5 3.5 V15.5" stroke="#444"/><path d="M8 3.5 V5 M12 3.5 V5 M13 7.5 V11" stroke="#bbb"/><circle cx="9.6" cy="9.3" r="3.1" fill="#fff" stroke="#2e8ad8" stroke-width="1.25"/><line x1="11.9" y1="11.6" x2="15.3" y2="15.1" stroke="#2e8ad8" stroke-width="1.35"/></svg>
<svg style="left:347px;top:144px" width="16" height="16" viewBox="0 0 16 16"><rect x="0.5" y="0.5" width="15" height="15" fill="#fff" stroke="#333"/><rect x="1" y="1" width="14" height="2" fill="#cfcfcf"/><path d="M0.5 3.5 H15.5" stroke="#333"/><path d="M4.5 6 V12.5 M2.2 10.2 L4.5 12.6 L6.8 10.2" fill="none" stroke="#2e8ad8" stroke-width="1.3"/><path d="M10.5 12.8 V6.3 M8.3 8.5 L10.5 6.3 L12.7 8.5" fill="none" stroke="#333" stroke-width="1.2"/></svg>
<svg style="left:347px;top:175px" width="16" height="16" viewBox="0 0 16 16"><rect x="1" y="2" width="14" height="12" fill="#fff"/><rect x="1" y="2" width="14" height="3" fill="#9ccffa"/><rect x="1" y="11" width="14" height="3" fill="#9ccffa"/><path d="M1 5.5 H15 M1 10.5 H15 M5.5 2 V5.5 M10.5 2 V5.5 M5.5 10.5 V14 M10.5 10.5 V14" stroke="#0a64c8"/><path d="M5.5 6 V10 M10.5 6 V10" stroke="#777"/><rect x="0.5" y="1.5" width="15" height="13" fill="none" stroke="#333"/></svg>
<svg style="left:347px;top:203px" width="16" height="16" viewBox="0 0 16 16"><path d="M8 0.5 H15.5 V15.5 H0.5 V10" fill="#f7f7f7" stroke="#333"/><rect x="1" y="11.5" width="14" height="3.5" fill="#fff"/><path d="M0.5 11.5 H15.5" stroke="#333"/><path d="M3.6 0 H7.6 L5.6 3.4 H7.8 L1.6 9.2 L3 5.2 H0.6 Z" fill="#e8780e"/></svg>
<svg style="left:347px;top:234px" width="16" height="16" viewBox="0 0 16 16"><path d="M10.5 5.5 V0.5 H0.5 V15.5 H10.5 V9.5" fill="none" stroke="#333"/><path d="M12 0.5 H15.5 V15.5 H12" fill="none" stroke="#707070"/><path d="M13 7.5 H2.5 M6.6 3.4 L2.5 7.5 L6.6 11.6" fill="none" stroke="#2e8ad8" stroke-width="1.3"/></svg>
<svg style="left:347px;top:262px" width="16" height="16" viewBox="0 0 16 16"><path d="M5.5 10.5 H0.5 V0.5 H15.5 V10.5 H9.5" fill="none" stroke="#333"/><path d="M0.5 12 V15.5 H15.5 V12" fill="none" stroke="#666"/><path d="M7.5 13 V2.5 M3.4 6.6 L7.5 2.5 L11.6 6.6" fill="none" stroke="#2e8ad8" stroke-width="1.3"/></svg>
<svg style="left:347px;top:290px" width="16" height="16" viewBox="0 0 16 16"><path d="M5.5 10.5 H0.5 V0.5 H15.5 V10.5 H9.5" fill="none" stroke="#333"/><path d="M0.5 12 V15.5 H15.5 V12" fill="none" stroke="#666"/><path d="M7.5 13 V2.5 M3.4 6.6 L7.5 2.5 L11.6 6.6" fill="none" stroke="#2e8ad8" stroke-width="1.3"/></svg>
<svg style="left:347px;top:321px" width="16" height="16" viewBox="0 0 16 16"><path d="M0 0.5 H6.5 V3.5 M0 15.5 H6.5 V11.5" fill="none" stroke="#333"/><path d="M0 6 H8.5 L7.3 7.5 L8.5 9 H0 Z" fill="#9ccffa"/><path d="M0 5.5 H8.5 M0 9.5 H8.5" stroke="#0a64c8" stroke-width="1"/><path d="M16 7.5 H9.3 M12.5 4.2 L9.2 7.5 L12.5 10.8" fill="none" stroke="#2e8ad8" stroke-width="1.3"/></svg>
<svg style="left:347px;top:349px" width="16" height="16" viewBox="0 0 16 16"><rect x="0.5" y="0.5" width="15" height="15" fill="#fff" stroke="#333"/><rect x="1" y="1" width="14" height="2" fill="#cfcfcf"/><path d="M0.5 3.5 H15.5" stroke="#333"/><path d="M0.5 7.5 H10 M0.5 11.5 H10 M5.5 3.5 V15.5" stroke="#555"/><rect x="10.5" y="3.5" width="5" height="12" fill="#9ccffa" stroke="#0a64c8"/></svg>
<svg style="left:347px;top:380px" width="16" height="16" viewBox="0 0 16 16"><rect x="0.5" y="0.5" width="14" height="14" fill="#fff" stroke="#333"/><path d="M2 2 H6 L5 3.8 H3 Z M9 2 H13 L12 3.8 H10 Z" fill="#2e8ad8"/><path d="M0.5 5.5 H14.5" stroke="#333"/><path d="M0.5 8.5 H14.5 M0.5 11.5 H14.5 M7.5 5.5 V14.5" stroke="#555"/></svg>
<svg style="left:347px;top:408px" width="16" height="16" viewBox="0 0 16 16"><path d="M0.5 14.5 V1.5 H15.5 V6.5 M7.5 14.5 H0.5" fill="none" stroke="#333"/><path d="M0.5 5.5 H15.5 M0.5 10.5 H7.5 M5.5 1.5 V14.5 M10.5 1.5 V7.5" stroke="#555"/><path d="M9.3 9.3 L15.7 15.7 M15.7 9.3 L9.3 15.7" stroke="#e8393a" stroke-width="1.3"/></svg>
<svg style="left:347px;top:439px" width="16" height="16" viewBox="0 0 16 16"><path d="M0 0.5 H6.5 V3.5 M0 15.5 H6.5 V11.5" fill="none" stroke="#333"/><path d="M0 6 H8 L10 7.5 L8 9 H0 Z" fill="#9ccffa"/><path d="M0 5.5 H8 M0 9.5 H8" stroke="#0a64c8"/><path d="M10 5 L15 10 M15 5 L10 10" stroke="#e8393a" stroke-width="1.3"/></svg>
<svg style="left:347px;top:467px" width="16" height="16" viewBox="0 0 16 16"><rect x="1" y="0" width="3" height="6" fill="#fff"/><rect x="11" y="0" width="3" height="6" fill="#fff"/><path d="M0.5 0 V6.5 H4 M14.5 0 V6.5 H11" fill="none" stroke="#333"/><path d="M6 0 H9 V8 L7.5 10 L6 8 Z" fill="#9ccffa"/><path d="M5.5 0 V8 M9.5 0 V8" stroke="#0a64c8"/><path d="M5 10.3 L10 15.3 M10 10.3 L5 15.3" stroke="#e8393a" stroke-width="1.3"/></svg>
<svg style="left:347px;top:498px" width="16" height="16" viewBox="0 0 16 16"><path d="M6 1.5 H14.5 V14.5 H6" fill="#f8f8f8" stroke="#333"/><path d="M2.5 0.5 V6.7 M0.2 2.7 L2.5 0.4 L4.8 2.7 M2.5 9 V15.6 M0.2 13.3 L2.5 15.6 L4.8 13.3" fill="none" stroke="#2e8ad8" stroke-width="1.3"/></svg>
<svg style="left:347px;top:529px" width="16" height="16" viewBox="0 0 16 16"><path d="M0.5 12.5 L5.3 0.3 L8.7 7.8 M2.3 8 H7.8" fill="none" stroke="#333" stroke-width="1.1"/><path d="M6.4 12.3 L12.4 6.3 L15.8 9.7 L9.8 15.7 Z" fill="#fff" stroke="#a53cc0" stroke-width="1.1"/><path d="M6.4 12.3 L8.2 10.5 L11.6 13.9 L9.8 15.7 Z" fill="#d99ae8" stroke="#a53cc0" stroke-width="1"/></svg>
<svg style="left:347px;top:557px" width="16" height="16" viewBox="0 0 16 16"><rect x="0.5" y="0.5" width="14" height="14" fill="#fafafa" stroke="#111"/><path d="M1.5 13.5 L13.5 1.5" stroke="#222" stroke-width="1.1"/><path d="M7.5 7.5 H14.5 M7.5 7.5 V14.5" stroke="#111"/><rect x="8" y="8" width="6" height="6" fill="#fafafa"/></svg>
<svg style="left:347px;top:588px" width="16" height="16" viewBox="0 0 16 16"><path d="M6.8 15.5 H2.5 V0.5 H9 L13.5 5 V6.8" fill="#fff" stroke="#333"/><path d="M8.5 0.5 V5.5 H13.5" fill="#fff" stroke="#333"/><rect x="8.5" y="7.5" width="5" height="3" fill="#fff" stroke="#333"/><rect x="6.5" y="10.5" width="9" height="3" fill="#fff" stroke="#333"/><rect x="8.5" y="12.5" width="5" height="3" fill="#fff" stroke="#333"/></svg>
<svg style="left:347px;top:616px" width="16" height="16" viewBox="0 0 16 16"><path d="M8.5 6 V1.5 H0.5 V13.5 H8.5 V11" fill="#fff" stroke="#333"/><rect x="1" y="2" width="7" height="2" fill="#cfcfcf"/><path d="M0.5 4.5 H8.5 M0.5 7.5 H7 M0.5 10.5 H7 M4.5 4.5 V13.5" stroke="#555"/><rect x="11.5" y="1.5" width="4" height="12" fill="#fff" stroke="#333"/><rect x="12" y="2" width="3" height="2" fill="#cfcfcf"/><path d="M11.5 4.5 H15.5 M11.5 7.5 H15.5 M11.5 10.5 H15.5" stroke="#555"/><path d="M7 8.4 L10 5.8 V11 Z" fill="#1e8c3a"/></svg>
<svg style="left:347px;top:647px" width="16" height="16" viewBox="0 0 16 16"><path d="M6.8 15.5 H2.5 V0.5 H13.5 V5.5" fill="#fff" stroke="#333"/><path d="M5 4.5 H11 M5 7.5 H7" stroke="#555"/><rect x="8.5" y="7.5" width="5" height="3" fill="#fff" stroke="#333"/><rect x="6.5" y="10.5" width="9" height="3" fill="#fff" stroke="#333"/><rect x="8.5" y="12.5" width="5" height="3" fill="#fff" stroke="#333"/></svg>
<svg style="left:347px;top:678px" width="16" height="16" viewBox="0 0 16 16"><path d="M10 0.5 H15.5 V15.5 H0.5 V10" fill="#fafafa" stroke="#666"/><path d="M8.5 4.5 V0.5 H0.5 V8.5 H4.5" fill="none" stroke="#333"/><path d="M6.3 6.6 H10.9 M6.3 6.6 V10.9 M6.5 6.8 L13 13" fill="none" stroke="#2e8ad8" stroke-width="1.4"/></svg>
<svg style="left:347px;top:706px" width="16" height="16" viewBox="0 0 16 16"><path d="M5.6 15.5 H2.5 V0.5 H9 L13.5 5" fill="#fff" stroke="#333"/><path d="M8.5 0.5 V5.5 H13.7" fill="none" stroke="#333"/><path d="M7.6 10.3 A4 3.4 0 0 1 14.6 8.8 M15.3 12.4 A4 3.4 0 0 1 8.8 14.2" fill="none" stroke="#1e8c3a" stroke-width="1.2"/><path d="M15.7 7.2 V10.4 H12.5 Z M7.3 12.3 V15.8 H10.6 Z" fill="#1e8c3a"/></svg>
</body></html>
